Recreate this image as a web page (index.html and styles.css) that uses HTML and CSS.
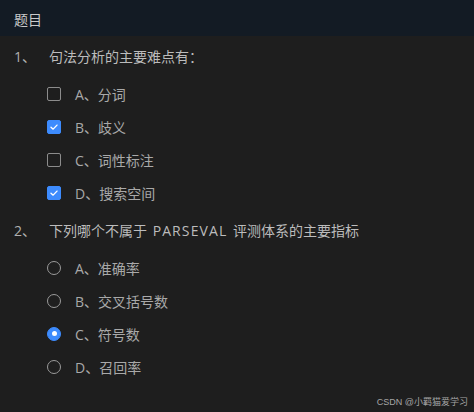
FILE: index.html
```html
<!DOCTYPE html>
<html lang="zh">
<head>
<meta charset="utf-8">
<link rel="stylesheet" href="styles.css">
</head>
<body>
<div class="page">
  <div class="header">题目</div>
  <div class="content">
    <div class="question">
      <div class="q-title"><span class="q-num">1、</span><span>句法分析的主要难点有：</span></div>
      <div class="options">
        <div class="opt"><span class="box"></span><span class="label">A、分词</span></div>
        <div class="opt"><span class="box checked"><svg viewBox="0 0 14 14" width="14" height="14"><path d="M3.5 7.2 L6 9.5 L10.5 4.8" fill="none" stroke="#fff" stroke-width="1.6" stroke-linecap="round" stroke-linejoin="round"/></svg></span><span class="label">B、歧义</span></div>
        <div class="opt"><span class="box"></span><span class="label">C、词性标注</span></div>
        <div class="opt"><span class="box checked"><svg viewBox="0 0 14 14" width="14" height="14"><path d="M3.5 7.2 L6 9.5 L10.5 4.8" fill="none" stroke="#fff" stroke-width="1.6" stroke-linecap="round" stroke-linejoin="round"/></svg></span><span class="label">D、搜索空间</span></div>
      </div>
    </div>
    <div class="question">
      <div class="q-title"><span class="q-num">2、</span><span>下列哪个不属于 <span class="latin">PARSEVAL</span> 评测体系的主要指标</span></div>
      <div class="options">
        <div class="opt"><span class="radio"></span><span class="label">A、准确率</span></div>
        <div class="opt"><span class="radio"></span><span class="label">B、交叉括号数</span></div>
        <div class="opt"><span class="radio checked"></span><span class="label">C、符号数</span></div>
        <div class="opt"><span class="radio"></span><span class="label">D、召回率</span></div>
      </div>
    </div>
  </div>
  <div class="watermark">CSDN @小羁猫爱学习</div>
</div>
</body>
</html>
```
FILE: styles.css
```css
html, body {
  margin: 0;
  padding: 0;
  background: #1e1e1e;
}
.page {
  position: relative;
  width: 474px;
  height: 412px;
  background: #1e1e1e;
  font-family: "Open Sans", "Noto Sans CJK SC", sans-serif;
  font-size: 14px;
  overflow: hidden;
}
.header {
  height: 36px;
  background: #131b24;
  color: #c9c9c9;
  padding-left: 14px;
  line-height: 39px;
  font-size: 14px;
}
.content {
  padding-top: 4px;
  display: flex;
  flex-direction: column;
  gap: 5px;
}
.question {
  display: flex;
  flex-direction: column;
  gap: 4px;
}
.q-title {
  height: 33px;
  line-height: 33px;
  color: #bcbcbc;
  display: flex;
  padding-left: 14px;
}
.q-num {
  width: 35px;
  color: #b0b0b0;
}
.latin {
  letter-spacing: 1.1px;
  margin: 0 2px;
}
.options {
  display: flex;
  flex-direction: column;
}
.opt {
  height: 33px;
  display: flex;
  align-items: center;
  padding-left: 47px;
  color: #a9a9a9;
}
.box {
  width: 12px;
  height: 12px;
  border: 1.5px solid #8c8c8c;
  border-radius: 2px;
  box-sizing: content-box;
  display: flex;
  align-items: center;
  justify-content: center;
}
.box.checked {
  background: #3d8bfd;
  border-color: #3d8bfd;
}
.box svg {
  display: block;
  width: 12px;
  height: 12px;
}
.radio {
  width: 12px;
  height: 12px;
  border: 1.5px solid #9a9a9a;
  border-radius: 50%;
  box-sizing: content-box;
  display: flex;
  align-items: center;
  justify-content: center;
}
.radio.checked {
  background: #3d8bfd;
  border-color: #3d8bfd;
}
.radio.checked::after {
  content: "";
  width: 5px;
  height: 5px;
  border-radius: 50%;
  background: #fff;
}
.label {
  margin-left: 14px;
}
.watermark {
  position: absolute;
  right: 6px;
  bottom: 4px;
  font-size: 9px;
  color: #a6a6a6;
  font-family: "Liberation Sans", "Noto Sans CJK SC", sans-serif;
}
```
